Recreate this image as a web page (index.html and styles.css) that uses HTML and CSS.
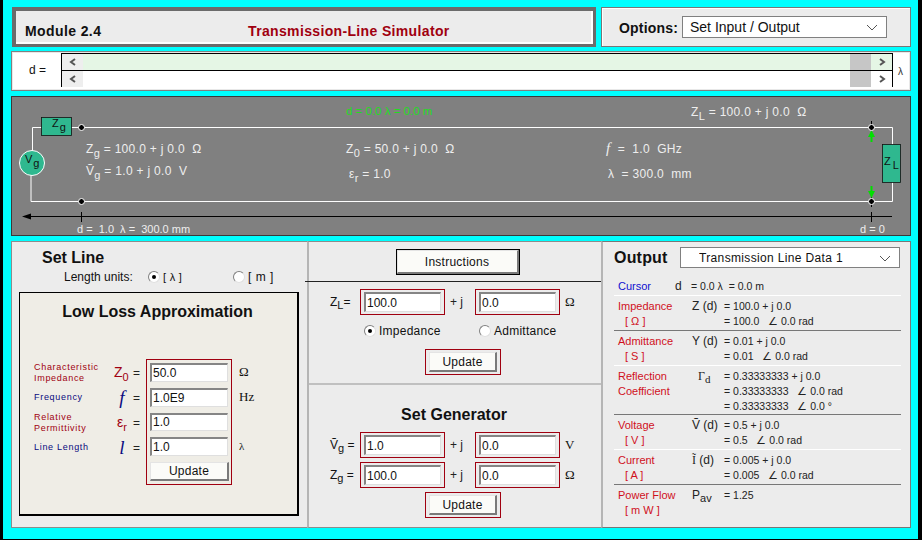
FILE: index.html
```html
<!DOCTYPE html>
<html lang="en">
<head>
<meta charset="utf-8">
<title>Transmission-Line Simulator</title>
<link rel="stylesheet" href="styles.css">
</head>
<body>
<div class="app">
  <div class="top">
    <div class="module"><b class="mod-name">Module 2.4</b><b class="mod-title">Transmission-Line Simulator</b></div>
    <div class="options"><b class="opt-label">Options:</b>
      <span class="sel-wrap sel-wrap-opt">
        <select class="sel sel-opt"><option>Set Input / Output</option></select>
        <svg class="sel-chev" width="12" height="7" viewBox="0 0 12 7"><path d="M1 1l5 5 5-5"/></svg>
      </span>
    </div>
  </div>

  <div class="drow">
    <span class="d-label">d =</span>
    <div class="bars">
      <div class="bar bar-green">
        <span class="arrow arrow-l"><svg width="8" height="8" viewBox="0 0 8 8"><path d="M6 1 2 4l4 3" class="chev"/></svg></span>
        <span class="thumb"></span>
        <span class="arrow"><svg width="8" height="8" viewBox="0 0 8 8"><path d="M2 1l4 3-4 3" class="chev"/></svg></span>
      </div>
      <div class="bar">
        <span class="arrow arrow-l"><svg width="8" height="8" viewBox="0 0 8 8"><path d="M6 1 2 4l4 3" class="chev"/></svg></span>
        <span class="thumb"></span>
        <span class="arrow"><svg width="8" height="8" viewBox="0 0 8 8"><path d="M2 1l4 3-4 3" class="chev"/></svg></span>
      </div>
    </div>
    <span class="d-unit">λ</span>
  </div>

  <svg class="diagram" width="900" height="140" viewBox="11 96 900 140">
    <rect x="11.500" y="96.500" width="899" height="139" class="dg-bg"/>
    <path d="M32.500 151V127.500H81M81 127.500H892.500V201.500H31V175" class="wire"/>
    <path d="M30 216.500H892M81.500 212V222M871.500 212V222M871.500 121V142M871.500 186V207" class="blk"/>
    <path d="M22 216.500l9-3v6z" class="blkfill"/>
    <path d="M871.500 130l-3.500 7h2.500v5h2v-5h2.500zM871.500 198l-3.500-7h2.500v-5h2v5h2.500z" class="grn"/>
    <rect x="41.500" y="117.500" width="30" height="18" class="comp"/>
    <rect x="882.500" y="144.500" width="18" height="38" class="comp"/>
    <circle cx="32" cy="163" r="12.500" class="comp-c"/>
    <circle cx="81.500" cy="127.500" r="3" class="dot"/>
    <circle cx="81.500" cy="201.500" r="3" class="dot"/>
    <circle cx="871.500" cy="127.500" r="3" class="dot"/>
    <circle cx="871.500" cy="201.500" r="3" class="dot"/>

    <text x="52" y="127" class="t-dk">Z<tspan dy="4" dx="1">g</tspan></text>
    <text x="884" y="165" class="t-dk">Z<tspan dy="4" dx="2">L</tspan></text>
    <text x="25" y="163" class="t-dk">V<tspan dy="4" dx="1">g</tspan></text>

    <text x="346" y="115" class="t-grn">d = 0.0 λ = 0.0 m</text>
    <text x="691" y="116" class="t-w">Z<tspan dy="4" class="sub">L</tspan><tspan dy="-4"> = 100.0 + j 0.0 &#160;Ω</tspan></text>
    <text x="86" y="153" class="t-w">Z<tspan dy="4" class="sub">g</tspan><tspan dy="-4"> = 100.0 + j 0.0 &#160;Ω</tspan></text>
    <text x="86" y="175" class="t-w">Ṽ<tspan dy="4" class="sub">g</tspan><tspan dy="-4"> = 1.0 + j 0.0 &#160;V</tspan></text>
    <text x="346" y="153" class="t-w">Z<tspan dy="4" class="sub">0</tspan><tspan dy="-4"> = 50.0 + j 0.0 &#160;Ω</tspan></text>
    <text x="349" y="178" class="t-w">ε<tspan dy="4" class="sub">r</tspan><tspan dy="-4"> = 1.0</tspan></text>
    <text x="606" y="153" class="t-w"><tspan class="ital">f</tspan> &#160;= &#160;1.0 &#160;GHz</text>
    <text x="608" y="178" class="t-w">λ &#160;= 300.0 &#160;mm</text>
    <text x="77" y="233" class="t-s">d = &#160;1.0 &#160;λ = &#160;300.0 mm</text>
    <text x="860" y="233" class="t-s">d = 0</text>
  </svg>

  <div class="lower">
    <section class="col-line">
      <h2 class="h-line">Set Line</h2>
      <div class="units">
        <span class="u-label">Length units:</span>
        <span class="radio on"></span><span class="u-a">[ λ ]</span>
        <span class="radio"></span><span class="u-b">[ m ]</span>
      </div>
      <div class="loss">
        <h3 class="h-loss">Low Loss Approximation</h3>
        <div class="loss-body">
          <div class="loss-labels">
            <div class="lrow red"><span class="lname">Characteristic<br>Impedance</span><span class="sym">Z<sub>0</sub></span><span class="eq">=</span></div>
            <div class="lrow blue"><span class="lname">Frequency</span><span class="sym serif-i">f</span><span class="eq">=</span></div>
            <div class="lrow red"><span class="lname">Relative<br>Permittivity</span><span class="sym sym-e">ε<sub>r</sub></span><span class="eq">=</span></div>
            <div class="lrow blue"><span class="lname">Line Length</span><span class="sym serif-i">l</span><span class="eq">=</span></div>
          </div>
          <div class="redbox stack">
            <input class="inp" value="50.0">
            <input class="inp" value="1.0E9">
            <input class="inp" value="1.0">
            <input class="inp" value="1.0">
            <button class="btn btn-wide">Update</button>
          </div>
          <div class="loss-units">
            <span class="unit">Ω</span>
            <span class="unit">Hz</span>
            <span class="unit"></span>
            <span class="unit unit-s">λ</span>
          </div>
        </div>
      </div>
    </section>

    <section class="col-mid">
      <div class="instr"><button class="btn btn-instr">Instructions</button></div>
      <div class="load">
        <div class="zrow">
          <span class="zlab">Z<sub>L</sub>=</span>
          <span class="redbox"><input class="inp" value="100.0"></span>
          <span class="plus">+ j</span>
          <span class="redbox"><input class="inp" value="0.0"></span>
          <span class="zunit">Ω</span>
        </div>
        <div class="radios">
          <span class="radio on"></span><span class="r-a">Impedance</span>
          <span class="radio"></span><span class="r-b">Admittance</span>
        </div>
        <div class="upd"><span class="redbox"><button class="btn btn-small">Update</button></span></div>
      </div>
      <div class="gen">
        <h2 class="h-gen">Set Generator</h2>
        <div class="zrow">
          <span class="zlab">Ṽ<sub>g</sub> =</span>
          <span class="redbox"><input class="inp" value="1.0"></span>
          <span class="plus">+ j</span>
          <span class="redbox"><input class="inp" value="0.0"></span>
          <span class="zunit">V</span>
        </div>
        <div class="zrow">
          <span class="zlab">Z<sub>g</sub> =</span>
          <span class="redbox"><input class="inp" value="100.0"></span>
          <span class="plus">+ j</span>
          <span class="redbox"><input class="inp" value="0.0"></span>
          <span class="zunit">Ω</span>
        </div>
        <div class="upd"><span class="redbox"><button class="btn btn-small">Update</button></span></div>
      </div>
    </section>

    <section class="col-out">
      <div class="out-head">
        <h2 class="h-out">Output</h2>
        <span class="sel-wrap sel-wrap-out">
          <select class="sel sel-out"><option>Transmission Line Data 1</option></select>
          <svg class="sel-chev" width="12" height="7" viewBox="0 0 12 7"><path d="M1 1l5 5 5-5"/></svg>
        </span>
      </div>
      <div class="out">
        <div class="orow r-cursor"><span class="o-l blue-t">Cursor</span><span class="o-s">d</span><span class="o-v">= 0.0 λ &#160;= 0.0 m</span></div>
        <div class="orow line-w"><span class="o-l">Impedance<br><i class="un">[ Ω ]</i></span><span class="o-s">Z (d)</span><span class="o-v">= 100.0 + j 0.0<br>= 100.0 &#160;&#160;∠ 0.0 rad</span></div>
        <div class="orow line-d"><span class="o-l">Admittance<br><i class="un">[ S ]</i></span><span class="o-s">Y (d)</span><span class="o-v">= 0.01 + j 0.0<br>= 0.01 &#160;&#160;∠ 0.0 rad</span></div>
        <div class="orow line-w"><span class="o-l">Reflection<br>Coefficient</span><span class="o-s"><span class="gam">Γ<sub>d</sub></span></span><span class="o-v">= 0.33333333 + j 0.0<br>= 0.33333333 &#160;&#160;∠ 0.0 rad<br>= 0.33333333 &#160;&#160;∠ 0.0 °</span></div>
        <div class="orow line-d"><span class="o-l">Voltage<br><i class="un">[ V ]</i></span><span class="o-s">Ṽ (d)</span><span class="o-v">= 0.5 + j 0.0<br>= 0.5 &#160;&#160;∠ 0.0 rad</span></div>
        <div class="orow line-w"><span class="o-l">Current<br><i class="un">[ A ]</i></span><span class="o-s"><span class="ser">Ĩ</span> (d)</span><span class="o-v">= 0.005 + j 0.0<br>= 0.005 &#160;&#160;∠ 0.0 rad</span></div>
        <div class="orow line-d"><span class="o-l">Power Flow<br><i class="un">[ m W ]</i></span><span class="o-s">P<sub>av</sub></span><span class="o-v">= 1.25</span></div>
      </div>
    </section>
  </div>
</div>
</body>
</html>
```

FILE: styles.css
```css
* { box-sizing: border-box; }
html, body { margin: 0; padding: 0; }
body { font-family: "Liberation Sans", Arial, sans-serif; font-size: 12px; color: #111; overflow: hidden; }
h2, h3 { margin: 0; }
sub { line-height: 0; }

.app {
  width: 922px; height: 540px;
  background: #00ffff;
  border-left: 3px solid #000;
  border-right: 4px solid #000;
  border-bottom: 1px solid #000;
  padding: 7px 7px 0 8px;
}

/* top row */
.top { display: flex; height: 40px; margin-left: 1px; gap: 5px; }
.module {
  width: 584px; height: 40px;
  background: #ececec;
  border: solid #6b6b6b;
  border-width: 4px 3px 3px 4px;
  box-shadow: inset -2px -2px 0 #fff;
  display: flex; align-items: center;
  padding: 7px 0 0 9px;
}
.mod-name { font-size: 14px; width: 223px; color: #111; letter-spacing: .4px; }
.mod-title { font-size: 14px; color: #a00010; letter-spacing: .35px; }
.options {
  width: 310px; height: 40px;
  background: #ececec;
  border: 1px solid #777;
  box-shadow: inset 1px 1px 0 #fff;
  display: flex; align-items: center;
  padding: 0 0 0 17px;
}
.opt-label { font-size: 14px; width: 63px; padding-top: 2px; letter-spacing: .2px; }
.sel-wrap { position: relative; display: block; flex: none; }
.sel-wrap-opt { width: 205px; height: 22px; }
.sel-wrap-out { width: 220px; height: 21px; }
.sel {
  display: block;
  appearance: none;
  width: 100%; height: 100%;
  font-family: "Liberation Sans", Arial, sans-serif;
  background: #fff;
  border: 1px solid #808080;
  border-radius: 0;
  color: #111;
}
.sel-chev { position: absolute; right: 9px; top: 8px; }
.sel-chev path { fill: none; stroke: #555; stroke-width: 1; }
.sel-opt { font-size: 14px; padding-left: 7px; }

/* d row */
.drow {
  margin-top: 4px; height: 40px;
  background: #fff;
  border: 1px solid #808080;
  box-shadow: inset 0 0 0 1px #e8e8e8;
  display: flex; align-items: center;
}
.d-label { width: 49px; padding: 0 0 3px 17px; font-size: 12px; }
.bars { width: 832px; height: 34px; margin-bottom: 2px; border: 1px solid #000; display: flex; flex-direction: column; }
.bar { flex: 1; display: flex; align-items: center; background: #fff; justify-content: space-between; }
.bar + .bar { border-top: 1px solid #000; }
.bar-green { background: #e5f6e5; }
.arrow { width: 21px; height: 16px; display: flex; align-items: center; justify-content: center; }
.arrow-l { background: #eee; }
.thumb { width: 21px; height: 16px; background: #c6c6c6; margin-left: auto; }
.chev { fill: none; stroke: #555; stroke-width: 2; }
.d-unit { font-size: 10px; margin-left: 5px; color: #333; }

/* diagram */
.diagram { display: block; margin-top: 5px; }
.dg-bg { fill: #808080; stroke: #3a3a3a; stroke-width: 1; }
.wire { fill: none; stroke: #fff; stroke-width: 1; }
.blk { fill: none; stroke: #000; stroke-width: 1; }
.blkfill { fill: #000; }
.grn { fill: #00e000; }
.comp { fill: #2fb88f; stroke: #111; stroke-width: .8; }
.comp-c { fill: #2fb88f; stroke: #fff; stroke-width: 1; }
.dot { fill: #000; stroke: #fff; stroke-width: 1; }
.diagram text { font-family: "Liberation Sans", Arial, sans-serif; }
.t-dk { font-size: 11px; fill: #111; }
.t-w { font-size: 12px; fill: #eee; letter-spacing: .3px; }
.t-s { font-size: 11px; fill: #eee; }
.t-grn { font-size: 11.5px; fill: #22dd22; }
.sub { font-size: 11px; }
.ital { font-family: "Liberation Serif", serif; font-style: italic; font-size: 15px; }

/* lower */
.lower {
  margin-top: 5px; height: 287px;
  display: grid; grid-template-columns: 296px 294px 310px; grid-template-rows: 287px;
  background: #ececec;
}
.col-line { border: solid #8c8c8c; border-width: 1px 0 1px 1px; }
.h-line { font-size: 16px; padding: 6px 0 0 30px; height: 25px; line-height: 19px; }
.units { display: flex; align-items: center; height: 18px; padding-left: 52px; margin-top: 1px; }
.u-label { width: 84px; font-size: 12px; }
.u-a { width: 70px; margin-left: 3px; font-size: 11px; letter-spacing: .3px; }
.u-b { margin-left: 3px; font-size: 12px; letter-spacing: .5px; }
.radio {
  width: 12px; height: 12px; flex: none;
  border-radius: 50%;
  background: #fff;
  border: 1px solid #e0e0e0;
  border-top-color: #808080; border-left-color: #808080;
  display: inline-flex; align-items: center; justify-content: center;
}
.radio.on::after { content: ""; width: 4px; height: 4px; border-radius: 50%; background: #000; }

.loss {
  margin: 6px 0 0 7px;
  width: 280px; height: 224px;
  background: #efede6;
  border: 1px solid #000;
  border-right-width: 2px; border-bottom-width: 2px;
}
.h-loss { font-size: 16px; text-align: center; padding-top: 9px; height: 66px; line-height: 19px; margin-right: 2px; }
.loss-body { display: flex; }
.loss-labels { width: 126px; padding: 1px 0 0 14px; }
.lrow { display: flex; align-items: center; height: 25px; }
.lname { width: 80px; font-size: 9px; line-height: 11px; letter-spacing: .7px; }
.red { color: #a00010; }
.blue { color: #0a0a80; }
.sym { width: 16px; font-size: 14px; line-height: 15px; white-space: nowrap; }
.sym sub { font-size: 11px; }
.sym-e { padding-left: 3px; }
.serif-i { font-family: "Liberation Serif", serif; font-style: italic; font-size: 19px; text-align: center; }
.eq { font-size: 12px; color: #222; margin-left: 3px; }
.redbox { border: 1px solid #a00010; padding: 2px 3px; display: inline-flex; flex: none; }
.stack { width: 86px; height: 126px; padding: 3px; flex-direction: column; gap: 6px; }
.inp {
  width: 78px; height: 19px;
  font: 12px "Liberation Sans", Arial, sans-serif;
  color: #111;
  background: #fff;
  padding: 0 0 0 1px;
  border: solid;
  border-width: 2px 1px 1px 2px;
  border-color: #858585 #dfdfdf #dfdfdf #858585;
  border-radius: 0;
  outline: none;
}
.btn {
  font: 12px "Liberation Sans", Arial, sans-serif;
  letter-spacing: .25px;
  color: #111;
  background: #fbfbf8;
  border: solid;
  border-width: 1px 2px 2px 1px;
  border-color: #e4e4e4 #7a7a7a #7a7a7a #e4e4e4;
  border-radius: 0;
  padding: 0;
}
.btn-wide { width: 79px; height: 19px; }
.loss-units { display: flex; flex-direction: column; padding: 0 0 0 7px; }
.unit { font: 13px/25px "Liberation Serif", serif; height: 25px; }
.unit-s { font-size: 11px; }

/* middle */
.col-mid { border-left: 2px solid #b5b5b5; border-top: 1px solid #8c8c8c; border-bottom: 1px solid #8c8c8c; }
.instr { height: 40px; border-bottom: 1px solid #222; display: flex; justify-content: center; padding-top: 7px; margin-left: -4px; }
.btn-instr { width: 124px; height: 26px; outline: 1px solid #000; outline-offset: -1px; border-width: 2px 3px 3px 2px; margin-left: 9px; }
.load { height: 103px; border-bottom: 2px solid #c0c0c0; padding-top: 7px; }
.zrow { display: flex; align-items: center; height: 26px; }
.zlab { width: 51px; padding-left: 21px; font-size: 12px; white-space: nowrap; }
.zlab sub { font-size: 11px; }
.plus { width: 30px; padding-left: 5px; color: #222; }
.zunit { margin-left: 5px; font: 13px "Liberation Serif", serif; }
.col-mid .redbox .inp { width: 77px; height: 20px; }
.radios { display: flex; align-items: center; height: 20px; margin-top: 6px; padding-left: 55px; }
.r-a { margin-left: 3px; width: 100px; letter-spacing: .25px; }
.r-b { margin-left: 3px; letter-spacing: .25px; }
.upd { display: flex; justify-content: center; margin-left: 16px; }
.load .upd { margin-top: 8px; }
.gen .upd { margin-top: 4px; }
.btn-small { width: 68px; height: 20px; }
.h-gen { font-size: 16px; line-height: 19px; text-align: center; padding-top: 20px; height: 47px; margin-left: -2px; }
.gen .zrow + .zrow { margin-top: 4px; }

/* output */
.col-out { background: #ececec; border: 1px solid #777; border-width: 1px 1px 1px 2px; border-left-color: #b5b5b5; }
.out-head { display: flex; align-items: center; height: 31px; padding: 0 0 0 11px; }
.h-out { font-size: 16px; width: 66px; letter-spacing: .2px; }
.sel-out { font-size: 12px; padding-left: 18px; letter-spacing: .35px; }
.out { margin: 6px 9px 0 11px; font-size: 11px; line-height: 15px; color: #222; }
.orow { display: flex; height: 35px; padding-top: 3px; border-top: 1px solid transparent; }
.orow:nth-child(4) { height: 49px; }
.r-cursor { padding: 0; height: 16px; border: 0; }
.r-cursor .o-l { width: 61px; }
.r-cursor .o-s { width: 16px; }
.line-w { border-top-color: #fff; }
.line-d { border-top-color: #777; }
.o-l { width: 78px; padding-left: 4px; color: #d0101c; flex: none; }
.blue-t { color: #1010d0; }
.o-s { width: 32px; font-size: 12px; white-space: nowrap; flex: none; }
.o-s sub { font-size: 11px; }
.gam { font-family: "Liberation Serif", serif; padding-left: 6px; }
.ser { font-family: "Liberation Serif", serif; }
.o-v { font-size: 10.5px; white-space: nowrap; }
.un { font-style: normal; padding-left: 7px; }
```
